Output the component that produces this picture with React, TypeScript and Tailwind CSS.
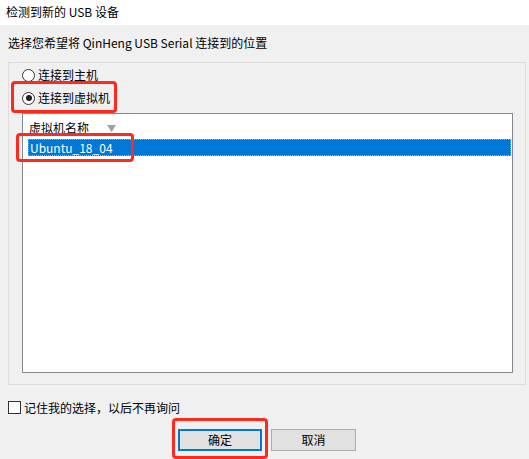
const font = { fontFamily: '"Microsoft YaHei", "Noto Sans CJK SC", "Noto Sans", sans-serif' };

const Radio = ({ checked, label }: { checked?: boolean; label: string }) => (
  <div className="flex items-center h-[14px]">
    <span className="w-[13px] h-[13px] rounded-full border border-[#333] bg-white flex items-center justify-center">
      {checked && <span className="w-[6px] h-[6px] rounded-full bg-[#222]" />}
    </span>
    <span className="ml-[3px] text-[12px] leading-[14px] text-black">{label}</span>
  </div>
);

export default function App() {
  return (
    <div className="relative w-[529px] h-[459px] bg-[#f0f0f0] overflow-hidden" style={font}>
      {/* title bar */}
      <div className="h-[25px] bg-white flex items-center pl-[6px] pb-[2px] text-[12px] text-black">
        检测到新的 USB 设备
      </div>

      <div className="pl-[8px] pt-[11px] text-[12px] leading-[14px] text-black">
        选择您希望将 QinHeng USB Serial 连接到的位置
      </div>

      {/* group box */}
      <div className="ml-[8px] mt-[12px] w-[518px] h-[323px] border border-[#dcdcdc] pt-[5px] pl-[13px]">
        <Radio label="连接到主机" />
        <div className="mt-[9px]">
          <Radio checked label="连接到虚拟机" />
        </div>

        <div className="mt-[8px] w-[491px] h-[260px] border border-[#828790] bg-white">
          <div className="h-[25px] flex items-center pl-[6px] pt-[3px] text-[12px] text-black">
            <span>虚拟机名称</span>
            <span className="ml-[18px] text-[#a0a0a0] text-[9px] leading-none">▼</span>
          </div>
          <div className="ml-[5px] mr-[1px] h-[17px] bg-[#0078d7] border border-dotted border-[#f0a030] flex items-center pl-[1px] text-[12px] text-white">
            Ubuntu_18_04
          </div>
        </div>
      </div>

      {/* remember checkbox */}
      <div className="mt-[16px] pl-[8px] flex items-center h-[13px]">
        <span className="w-[13px] h-[13px] border border-[#333] bg-white" />
        <span className="ml-[3px] text-[12px] leading-[14px] text-black">记住我的选择，以后不再询问</span>
      </div>

      {/* buttons */}
      <div className="mt-[15px] flex pl-[178px] gap-[9px]">
        <button className="w-[84px] h-[22px] border-2 border-[#0078d7] bg-[#e1e1e1] text-[12px] text-black">
          确定
        </button>
        <button className="w-[85px] h-[22px] border border-[#adadad] bg-[#e1e1e1] text-[12px] text-black">
          取消
        </button>
      </div>

      {/* red annotations */}
      <div className="absolute left-[11px] top-[81px] w-[106px] h-[32px] border-[3px] border-[#ff2a1f] rounded-[4px]" />
      <div className="absolute left-[16px] top-[133px] w-[118px] h-[29px] border-[3px] border-[#ff2a1f] rounded-[4px]" />
      <div className="absolute left-[172px] top-[418px] w-[96px] h-[41px] border-[3px] border-[#ff2a1f] rounded-[4px]" />
    </div>
  );
}
